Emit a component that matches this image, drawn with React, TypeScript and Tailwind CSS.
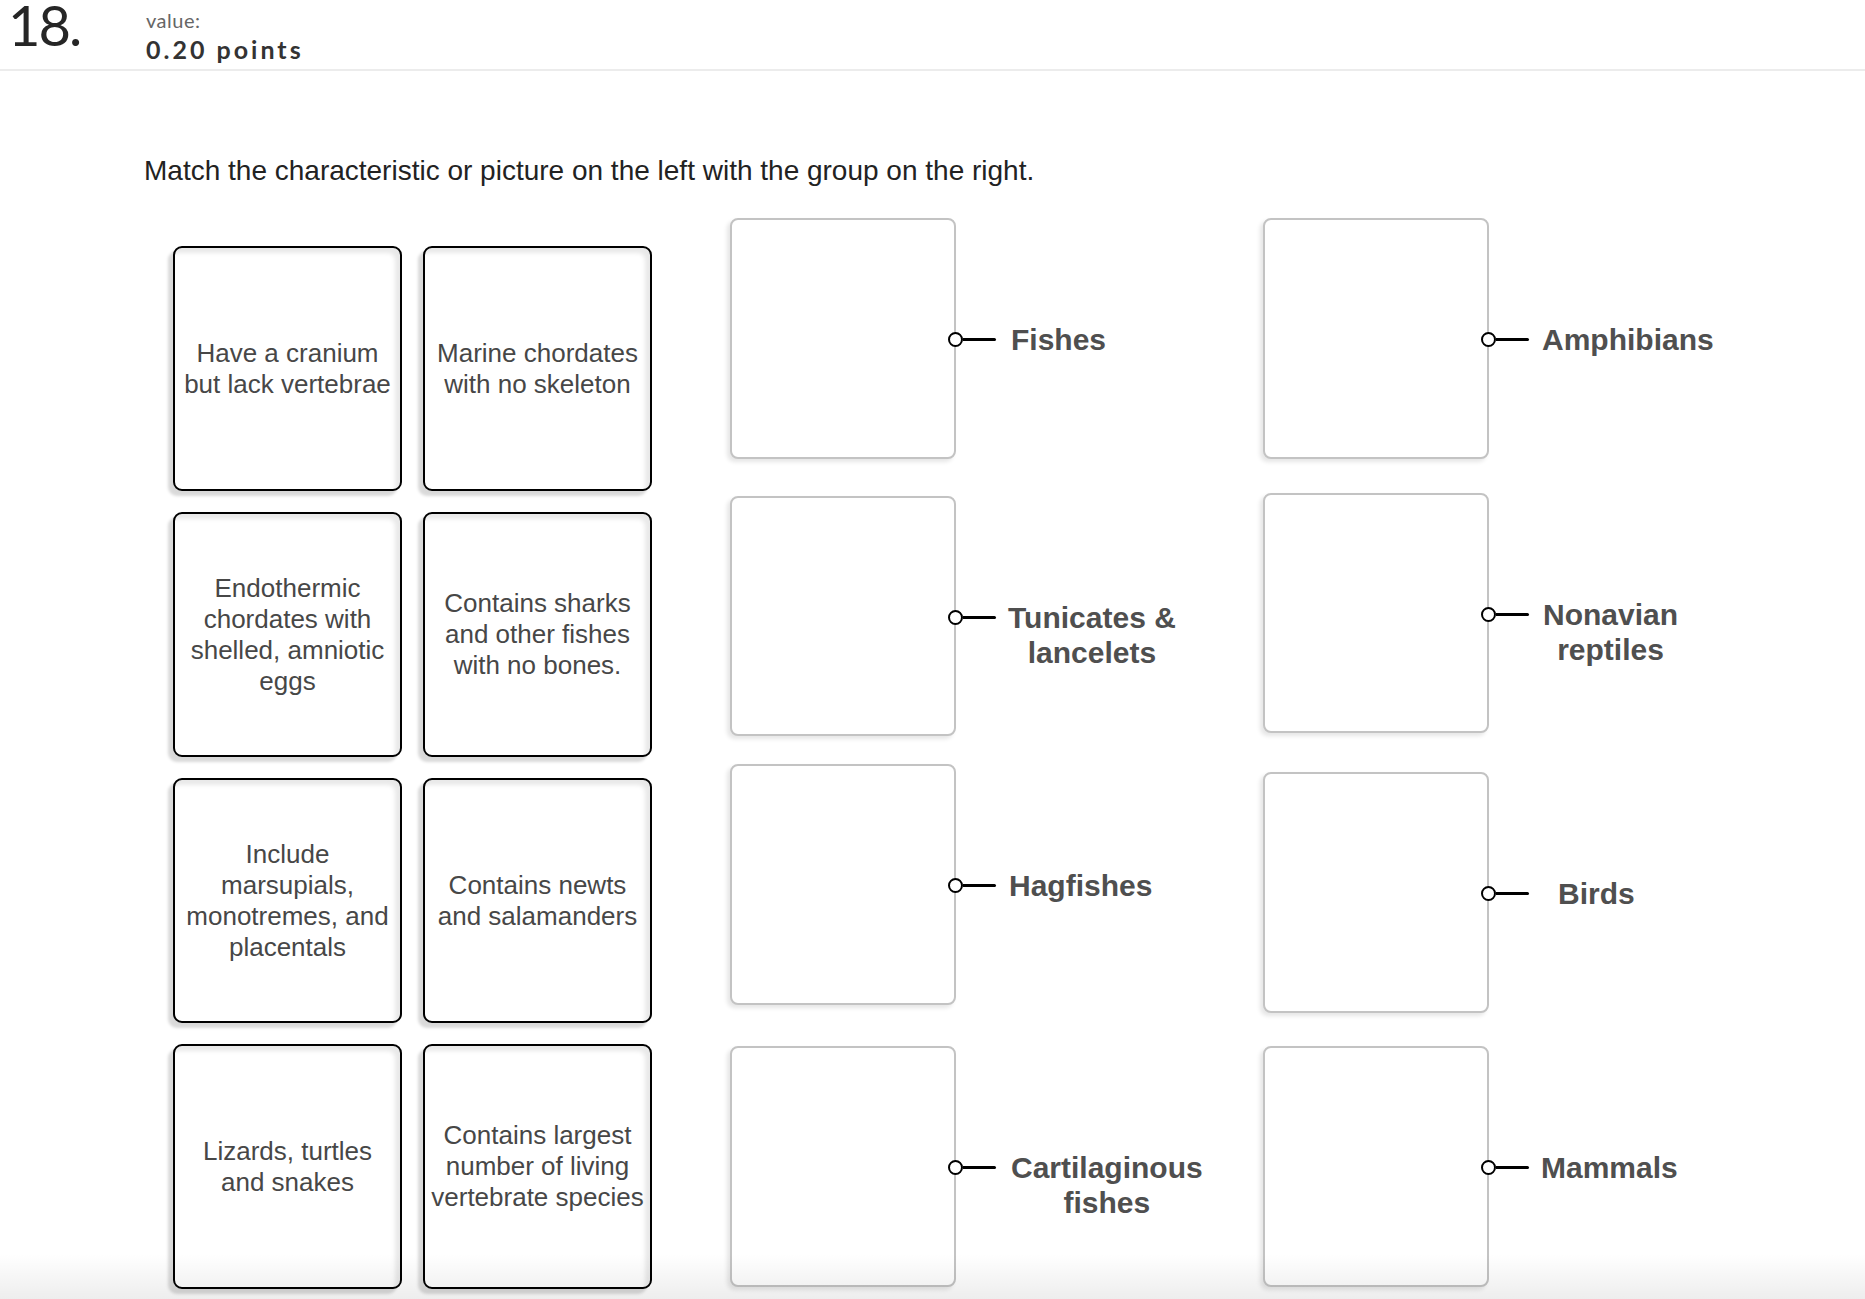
import React from "react"

const ARIAL = "font-[family-name:Liberation_Sans,Arial,sans-serif]"

const CARDS = [
  "Have a cranium but lack vertebrae",
  "Marine chordates with no skeleton",
  "Endothermic chordates with shelled, amniotic eggs",
  "Contains sharks and other fishes with no bones.",
  "Include marsupials, monotremes, and placentals",
  "Contains newts and salamanders",
  "Lizards, turtles and snakes",
  "Contains largest number of living vertebrate species",
]

type Target = { lines: string[]; mt: string; h: string; shift?: string }

// margins/heights follow the slightly uneven placement in the original
const COL_A: Target[] = [
  { lines: ["Fishes"], mt: "mt-0", h: "h-[241px]", shift: "ml-[15px]" },
  { lines: ["Tunicates &", "lancelets"], mt: "mt-[37px]", h: "h-[240px]", shift: "ml-[12px]" },
  { lines: ["Hagfishes"], mt: "mt-[28px]", h: "h-[241px]", shift: "ml-[13px]" },
  { lines: ["Cartilaginous", "fishes"], mt: "mt-[41px]", h: "h-[241px]", shift: "ml-[15px]" },
]

const COL_B: Target[] = [
  { lines: ["Amphibians"], mt: "mt-0", h: "h-[241px]", shift: "ml-[13px]" },
  { lines: ["Nonavian", "reptiles"], mt: "mt-[34px]", h: "h-[240px]", shift: "ml-[14px]" },
  { lines: ["Birds"], mt: "mt-[39px]", h: "h-[241px]", shift: "ml-[29px]" },
  { lines: ["Mammals"], mt: "mt-[33px]", h: "h-[241px]", shift: "ml-[12px]" },
]

function Card({ text }: { text: string }) {
  return (
    <div className="h-[245px] rounded-[9px] border-2 border-black bg-white flex items-center justify-center shadow-[-5px_5px_3px_rgba(0,0,0,0.15),inset_-5px_5px_4px_rgba(0,0,0,0.09)]">
      <div className={`w-[215px] text-center text-[26px] leading-[31px] text-[#474747] ${ARIAL}`}>
        {text}
      </div>
    </div>
  )
}

function DropTarget({ t }: { t: Target }) {
  return (
    <div className={`flex items-start ${t.mt}`}>
      <div
        className={`w-[226px] ${t.h} shrink-0 rounded-[8px] border-2 border-[#c3c3c3] bg-white shadow-[-3px_3px_4px_rgba(0,0,0,0.1)]`}
      />
      <div className="flex items-start mt-[104px] -ml-[8px]">
        <div className="flex items-center h-[35px]">
          <span className="w-[15px] h-[15px] rounded-full border-2 border-black bg-white" />
          <span className="w-[33px] h-[3px] rounded-r-full bg-black" />
        </div>
        <div
          className={`${t.shift ?? ""} w-fit text-center text-[30px] font-bold leading-[35px] text-[#4f4f4f] whitespace-nowrap ${ARIAL}`}
        >
          {t.lines.map((l, i) => (
            <div key={i}>{l}</div>
          ))}
        </div>
      </div>
    </div>
  )
}

export default function App() {
  return (
    <div className="relative h-[1299px] overflow-hidden bg-white">
      {/* Header */}
      <header className="flex h-[71px] border-b-2 border-[#ececec] font-[family-name:Lato,sans-serif]">
        <div className="w-[146px] pl-[8px] text-[56px] leading-[50px] tracking-[-2px] text-[#262626]">
          18.
        </div>
        <div className="pt-[9px]">
          <div className="text-[20px] leading-[22px] tracking-[0.5px] text-[#666]">value:</div>
          <div className="mt-[3px] text-[25px] leading-[30px] font-bold tracking-[3px] text-[#333]">
            0.20 points
          </div>
        </div>
      </header>

      <main className="pl-[144px]">
        <p className={`mt-[84px] text-[28px] leading-[32px] text-[#222] ${ARIAL}`}>
          Match the characteristic or picture on the left with the group on the right.
        </p>

        <div className="flex items-start mt-[31px]">
          {/* Draggable characteristics */}
          <div className="ml-[29px] mt-[28px] grid grid-cols-[229px_229px] gap-[21px]">
            {CARDS.map((c) => (
              <Card key={c} text={c} />
            ))}
          </div>

          {/* Drop targets */}
          <div className="ml-[78px] flex">
            <div className="w-[533px] flex flex-col">
              {COL_A.map((t) => (
                <DropTarget key={t.lines.join()} t={t} />
              ))}
            </div>
            <div className="flex flex-col">
              {COL_B.map((t) => (
                <DropTarget key={t.lines.join()} t={t} />
              ))}
            </div>
          </div>
        </div>
      </main>

      {/* bottom fade of the scroll area */}
      <div className="pointer-events-none absolute inset-x-0 bottom-0 h-[45px] bg-gradient-to-b from-transparent to-black/[0.07]" />
    </div>
  )
}
